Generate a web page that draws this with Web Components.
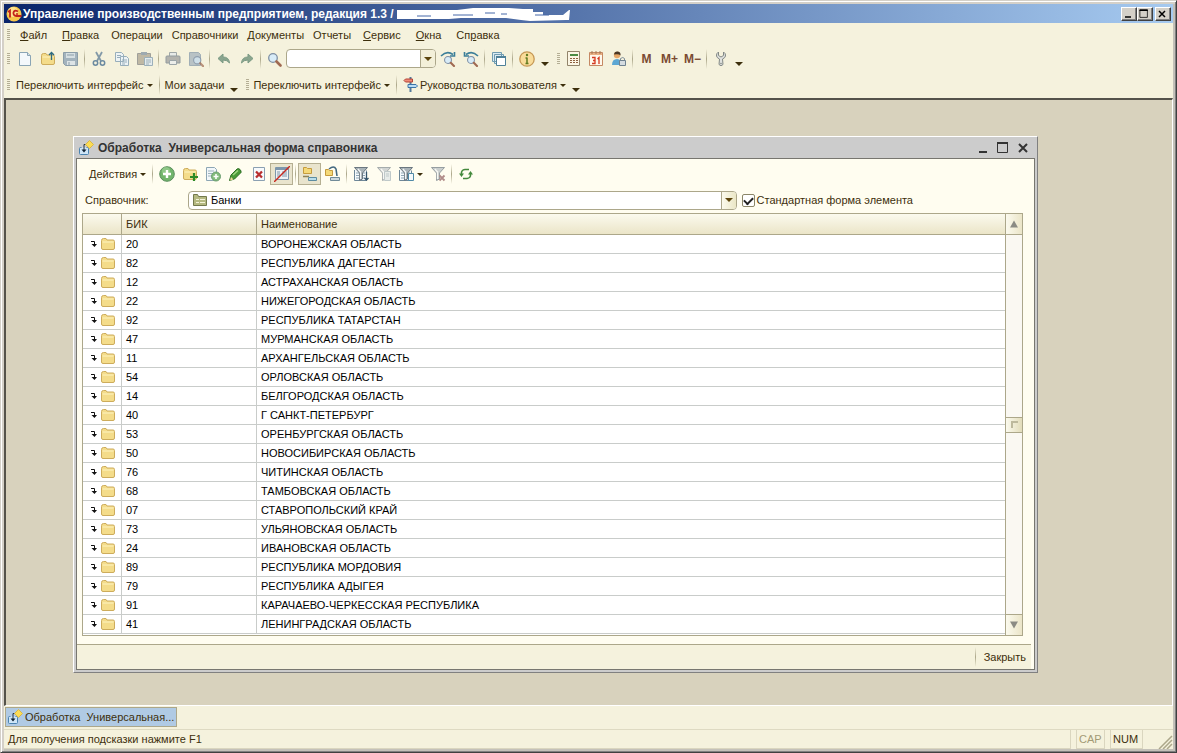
<!DOCTYPE html>
<html lang="ru">
<head>
<meta charset="utf-8">
<title>Управление производственным предприятием</title>
<style>
  html, body {
    height: 100%;
    margin: 0;
  }
  body {
    --cream: #f5f2dd;
    --line: #aca78a;
    --ink: #3d2f0c;
    font: 11px/16px "Liberation Sans", Arial, sans-serif;
    color: var(--ink);
  }
</style>
</head>
<body>
<app-frame>
  <title-bar slot="title"></title-bar>
  <menu-bar slot="menu"></menu-bar>
  <main-tools slot="tools"></main-tools>
  <mdi-window heading="Обработка  Универсальная форма справоника">
    <form-tools></form-tools>
    <catalog-form></catalog-form>
    <bank-table></bank-table>
    <button-bar slot="footer"></button-bar>
  </mdi-window>
  <task-bar slot="tasks"></task-bar>
  <status-bar slot="status"></status-bar>
</app-frame>

<script>
/** Inner svg markup of every icon, 16x16 */
const folder = `<path d="M1.500 4.500q0-2 2-2h2.500l1 1.500h6q1.500 0 1.500 1.500v6.500q0 1.500-1.500 1.500h-10q-1.500 0-1.500-1.500z" fill="#f4dc8a" stroke="#cdac5c"/><path d="M2.500 6h11" stroke="#fdf3c0"/>`;
const sheet = `<path d="M2.500 1.500h8l3 3v10h-11z" fill="#f3f8fb" stroke="#8aa5b5"/><path d="M10.500 1.500v3h3" fill="#d5e3ea" stroke="#8aa5b5"/>`;
const glass = (x, y) => `<g transform="translate(${x} ${y})"><circle cx="5" cy="5" r="4.300" fill="#d8ecf8" stroke="#7e8fa3" stroke-width="1.300"/><path d="M8.500 8.500l4 4" stroke="#a06a52" stroke-width="2.600" stroke-linecap="round"/></g>`;
const funnel = (c) => `<path d="M1.500 1.500h13l-5 5.500v6l-3 1.500v-7.500z" fill="${c}" stroke="#6b7780"/><path d="M7.500 5v8M5 3l2 2.500" stroke="#f4f6f7" stroke-width="1.300"/>`;
const lines = `<path d="M1.500 4v10.500h12v-10" fill="#f6fafc" stroke="#6e8798"/><path d="M3 7h9M3 9.500h9M3 12h9" stroke="#8ea6b5"/>`;

const ICONS = {
  logo: `<circle cx="8" cy="8" r="7.500" fill="#f7c64a"/><circle cx="7" cy="6" r="5" fill="#fff0ad" opacity=".7"/><path d="M2 6l2-1.500v7M12 5.500q-3.500-2-4.500 1-.5 3 3 3.500h5" fill="none" stroke="#c4231a" stroke-width="1.800"/><path d="M12 8H10" stroke="#c4231a" stroke-width="1.500"/>`,
  processing: `<path d="M3.500 7.500h-1q-1 0-1 1v5q0 1 1 1h7q1 0 1-1v-5q0-1-1-1h-1" fill="#cfe6f7" stroke="#4a83b0"/><path d="M6 11V4.500h3" fill="none" stroke="#234"/><path d="M3.500 9.500h5L6 12.500z" fill="#123"/><path d="M11.500 .5l4 4-4 4-4-4z" fill="#fbdc55" stroke="#d9b64a"/>`,
  doc: sheet,
  open: folder + `<path d="M11.500 9V1.500M9 4l2.500-2.500L14 4" fill="none" stroke="#2c6a80" stroke-width="1.300"/>`,
  save: `<path d="M.5 1.500h14v13h-12l-2-2z" fill="#a3b3bd" stroke="#8b9da8"/><path d="M3 2h9v5H3z" fill="#d6dfe2"/><path d="M4 10h8v4H4z" fill="#dde4e6"/><path d="M4 4h7M6 11v3" stroke="#8b9da8"/>`,
  cut: `<path d="M5 1l5 9M11 1L6 10" stroke="#8299a8" stroke-width="1.800"/><circle cx="4.500" cy="12" r="2.200" fill="none" stroke="#6b8aa0" stroke-width="1.500"/><circle cx="11.500" cy="12" r="2.200" fill="none" stroke="#6b8aa0" stroke-width="1.500"/>`,
  copy: `<path d="M1.500 1.500h6l2 2v7h-8zM6.500 5.500h6l2 2v7h-8z" fill="#edf3f5" stroke="#97aebb"/><path d="M3 4.500h4M3 6.500h3M8 9h5M8 11h5M8 13h3" stroke="#97aebb"/>`,
  paste: `<path d="M.5 2.500h13v11H.5z" fill="#bfb8a4" stroke="#a0a09a"/><path d="M4 1h6v3H4z" fill="#9eaab0"/><path d="M7.500 6.500h8v8h-8z" fill="#e4ebed" stroke="#9cb0ba"/><path d="M9 9h5M9 11h5M9 13h3" stroke="#9cb0ba"/>`,
  print: `<path d="M4.500 6V1.500h7V6" fill="#e8ebe8" stroke="#a0a8a8"/><path d="M1 6q0-1 1-1h12q1 0 1 1v6H1z" fill="#b3b3ad" stroke="#939c9f"/><path d="M4.500 9.500h7v4h-7z" fill="#eceeea" stroke="#9ba5a8"/>`,
  preview: `<path d="M1.500 1.500h9l2 2v11h-11z" fill="#b8c2c5" stroke="#a1afb6"/><g opacity=".7" transform="translate(5 5) scale(.85)">${glass(0, 0)}</g>`,
  undo: `<path d="M7 3v3q6 0 6.500 6-2-3-6.500-3v3L2 7.500z" fill="#8aa58e" stroke="#7b9a84"/>`,
  redo: `<path d="M9 3v3q-6 0-6.500 6 2-3 6.500-3v3l5-4.500z" fill="#8aa58e" stroke="#7b9a84"/>`,
  find: glass(1, 2),
  next: `<path d="M1 5q6-6 12-1.500M14.500 1v4H10" fill="none" stroke="#3c7f99" stroke-width="1.600"/><g transform="translate(4 5) scale(.8)">${glass(0, 0)}</g>`,
  prev: `<path d="M15 5q-6-6-12-1.500M1.500 1v4H6" fill="none" stroke="#3c7f99" stroke-width="1.600"/><g transform="translate(4 5) scale(.8)">${glass(0, 0)}</g>`,
  windows: `<path d="M1.500 1.500h9v9h-9zM3.500 3.500h9v9h-9z" fill="#dcebf2" stroke="#6f9bb0"/><path d="M5.500 5.500h9v9h-9z" fill="#fff" stroke="#4f8199"/><path d="M5 6h10" stroke="#4f8199" stroke-width="2"/>`,
  info: `<circle cx="8" cy="8" r="7.200" fill="#f9dc99" stroke="#c69855" stroke-width="1.300"/><path d="M8 6.500V13M6.500 7H8M6.500 12.500h3" stroke="#607a20" stroke-width="1.500"/><circle cx="8" cy="4" r="1.200" fill="#607a20"/>`,
  calc: `<path d="M2.500 .5h12v14h-12z" fill="#fbf6e4" stroke="#92846a"/><path d="M5 4h8" stroke="#4b8b43" stroke-width="2"/><path d="M5 7.500h8M5 9.500h8M5 11.500h8" stroke="#8e6040" stroke-dasharray="2 1"/>`,
  calendar: `<path d="M1.500 1.500h13v13h-13z" fill="#fff8ec" stroke="#c58863"/><path d="M2 3h12" stroke="#e9b184" stroke-width="2"/><path d="M4 0v3M8 0v3M12 0v3" stroke="#a57655"/><path d="M4 6.500h3v3H5M7 9.500v3H4M9.500 8l1.500-1.500V13" fill="none" stroke="#d5391f" stroke-width="1.300"/>`,
  user: `<circle cx="6" cy="4" r="3.200" fill="#e7a868"/><path d="M3 3.500Q3.500 0 7 .5q3 .5 2.500 4Q8 2.500 3 3.500z" fill="#493725"/><path d="M1 14q0-6 5-6t5 6z" fill="#5ca7d3"/><path d="M9.500 9V7.500q2.500-2 4 0V9" fill="none" stroke="#7e8d96"/><path d="M8.500 9.500h6v5h-6z" fill="#d5dce0" stroke="#6f8290"/>`,
  wrench: `<path d="M5.500 1Q3 2.500 3.500 5q.5 2 3 3l-.5 5.500q2 2.500 4 0L9.500 8q2.500-1 3-3 .5-2.500-2-4v3.500L8 6 5.500 4.500z" fill="#dfe1de" stroke="#838986"/><circle cx="8" cy="12.500" r=".8" fill="#838986"/>`,
  signpost: `<path d="M7.500 0v15" stroke="#53799a" stroke-width="2"/><path d="M1 3.500l1.500-1.500h7v3h-7z" fill="#ee8a78" stroke="#b34335"/><path d="M5 7.500h8l1.500 1.500-1.500 1.500H5z" fill="#b8dcf5" stroke="#3a73a8"/>`,
  add: `<circle cx="8" cy="8" r="7.300" fill="#72b56c" stroke="#5a8d5c"/><circle cx="7" cy="5" r="4" fill="#aad99f" opacity=".5"/><path d="M8 4v8M4 8h8" stroke="#fff" stroke-width="2.400"/>`,
  addFolder: folder + `<path d="M12 7v8M8 11h8" stroke="#2d8a27" stroke-width="2.200"/>`,
  addCopy: `<path d="M1.500 1.500h8l2 2v11h-10z" fill="#f2f7fa" stroke="#8da6b4"/><path d="M3 5h6M3 7.500h5M3 10h4" stroke="#9cb1bd"/><circle cx="11" cy="10.500" r="4.500" fill="#84bd7c" stroke="#6b9d70"/><path d="M11 8v5M8.500 10.500h5" stroke="#fff" stroke-width="1.600"/>`,
  edit: `<path d="M3 9l6-6q1.500-1 3 .5t1 3l-6.500 6.500-5 1.500z" fill="#4b9a38" stroke="#2f6e26"/><path d="M5 9l5-4.500" stroke="#a2d783" stroke-width="1.500"/><path d="M2 14.500l1-3.500 2.500 2.500z" fill="#f0d69a"/>`,
  remove: `<path d="M2.500 1.500h11v13h-11z" fill="#f7fafc" stroke="#8ba0b2"/><path d="M5 5.500l6 6M11 5.500l-6 6" stroke="#b92e2e" stroke-width="2.300"/>`,
  mark: `<path d="M1.500 1.500h13v12h-13z" fill="#eef2f5" stroke="#7d96ab"/><path d="M1 3h14" stroke="#7d96ab" stroke-width="2"/><path d="M3 6h3M3 8h3M3 10h3M8 6h5M8 8h5M8 10h5" stroke="#7d96ab"/><path d="M0 16L16 0" stroke="#c8281f" stroke-width="1.400"/>`,
  tree: `<path d="M1.500 1.500h3l1 1h4v5h-8z" fill="#f4d978" stroke="#c59b3d"/><path d="M1 10.500h6" stroke="#8d8356" stroke-width="1.500"/><path d="M6.500 11.500h8v3h-8z" fill="#b9ddea" stroke="#5d8ca0"/>`,
  move: `<path d="M.5 3.500h3l1 1h3v5h-7z" fill="#f4d978" stroke="#c59b3d"/><path d="M4 3q5-4 7 0l1 7" fill="none" stroke="#436880" stroke-width="1.600"/><path d="M5.500 11.500h9v3h-9z" fill="#cdd9de" stroke="#718b98"/>`,
  filterSet: lines + funnel("#a9b3b8") + `<path d="M13.500 6v8M11.500 12l2 2 2-2" fill="none" stroke="#34536a" stroke-width="1.300"/>`,
  filterValue: `<g opacity=".6">${funnel("#b5bcc0")}<path d="M8.500 5.500h6v9h-6z" fill="#dae2e6" stroke="#95a7b0"/><path d="M10 8h3M10 10h3" stroke="#95a7b0"/></g>`,
  filterList: lines + funnel("#a9b3b8") + `<path d="M10.500 7.500h5v7h-5z" fill="#f4f9fc" stroke="#508aa7"/>`,
  filterOff: `<g opacity=".7">${funnel("#b5bcc0")}</g><path d="M9.500 9.500l5 5M14.500 9.500l-5 5" stroke="#b18c89" stroke-width="1.800"/>`,
  refresh: `<path d="M3.500 8Q3 4 7 3.500h4M12.500 8q.5 4-3.500 4.500H5" fill="none" stroke="#43893c" stroke-width="1.600"/><path d="M1 7.500h5L3.500 11zM10 8.500h5L12.500 5z" fill="#43893c"/>`,
  catalog: `<path d="M1.500 2.500h4l1 2h8v9h-13z" fill="#b5b982" stroke="#73794d"/><path d="M4 7.500h3M8 7.500h5M4 10.500h3M8 10.500h5" stroke="#f4f3d9"/>`,
  folder,
  branch: `<path d="M6 5.500h3.500V9" fill="none" stroke="#111"/><path d="M6.500 8h5.500l-2.500 3z" fill="#111"/>`,
  up: `<path d="M4 11.500h8l-4-7z" fill="#8b8b84"/>`,
  down: `<path d="M4 4.500h8l-4 7z" fill="#8b8b84"/>`,
  minimize: `<path d="M4 12h8" stroke="currentColor" stroke-width="2"/>`,
  maximize: `<path d="M2.500 2.500h10v10h-10z" fill="none" stroke="currentColor"/><path d="M2 3h11" stroke="currentColor" stroke-width="2"/>`,
  close: `<path d="M4 4l8 8M12 4l-8 8" stroke="currentColor" stroke-width="2"/>`,
  more: `<path d="M4 9h8l-4 4z" fill="#3d2f0c"/>`,
  caret: `<path d="M5 7h6l-3 3z" fill="#3d2f0c"/>`,
  comboCaret: `<path d="M4 6h8l-4 4z" fill="#5c450c"/>`,
  grip: `<path d="M2 16L15 3M6 16l9-9M10 16l5-5" stroke="#aca78a" stroke-width="1.500"/>`
};

const icon = (name, cls = "") =>
  `<svg class="icon ${cls}" viewBox="0 0 16 16" width="16" height="16" aria-hidden="true">${ICONS[name]}</svg>`;

// rules that every element starts with
const BASE = `
  :host { display: block; box-sizing: border-box; }
  * { box-sizing: border-box; }
  svg { display: block; flex: none; }
  button, input {
    font: inherit;
    color: inherit;
    margin: 0;
    padding: 0;
    border: 0;
    background: none;
  }
`;

// rules shared by the toolbars
const TOOLS = `
  .row { display: flex; align-items: center; }
  .tool {
    display: flex;
    align-items: center;
    justify-content: center;
    flex: none;
    width: 23px;
    height: 22px;
    border: 1px solid transparent;
  }
  .tool.pressed { background: #e9e4cd; border-color: #b5af92; }
  .label { width: auto; white-space: nowrap; }
  .caret { margin: 0 -4px 0 -2px; }
  .sep {
    flex: none;
    width: 1px;
    height: 20px;
    margin: 0 2px;
    background: linear-gradient(transparent, #aca78a, transparent);
  }
  .grip {
    flex: none;
    width: 3px;
    height: 12px;
    background: repeating-linear-gradient(#b4ae94 0 1px, transparent 1px 2px);
  }
  .more { width: 13px; padding-top: 4px; }
`;

class BaseElement extends HTMLElement {
  constructor() {
    super();
    this.attachShadow({ mode: "open" });
  }

  /**
   * Put style and markup into the shadow root
   * @param {string} css
   * @param {string} html
   */
  render(css, html) {
    const template = document.createElement("template");
    template.innerHTML = `<style>${BASE}${css}</style>${html}`;
    this.shadowRoot.replaceChildren(template.content.cloneNode(true));
  }
}

const tool = (name, title, cls = "") =>
  `<button class="tool ${cls}" title="${title}" aria-label="${title}">${icon(name)}</button>`;
const more = `<button class="tool more" aria-label="Ещё">${icon("more")}</button>`;
const sep = `<span class="sep"></span>`;
const grip = `<span class="grip"></span>`;

class AppFrame extends BaseElement {
  connectedCallback() {
    this.render(`
      :host {
        display: flex;
        flex-direction: column;
        min-height: 100vh;
        padding: 3px;
        background: var(--cream);
        border: 1px solid #d4d0c8;
        border-right-color: #404040;
        border-bottom-color: #404040;
        box-shadow: inset 1px 1px #fff, inset -1px -1px #808080, inset 3px 3px #d4d0c8, inset -3px -3px #c4c1b9;
      }
      .desk {
        display: flex;
        flex: 1;
        padding: 36px 134px 32px 67px;
        background: #d8d2bd;
        border: 2px solid #54524a;
        border-right: 1px solid #fff;
        border-bottom: 1px solid #fff;
      }
    `, `
      <slot name="title"></slot>
      <slot name="menu"></slot>
      <slot name="tools"></slot>
      <main class="desk"><slot></slot></main>
      <slot name="tasks"></slot>
      <slot name="status"></slot>
    `);
  }
}

class TitleBar extends BaseElement {
  connectedCallback() {
    this.render(`
      :host {
        display: flex;
        align-items: center;
        height: 19px;
        padding: 0 2px;
        color: #fff;
        background: linear-gradient(90deg, #0a246a, #a6caf0);
      }
      h1 {
        margin: 0 0 0 1px;
        font-size: 12px;
        line-height: 16px;
        white-space: pre;
      }
      .space { flex: 1; }
      button {
        width: 16px;
        height: 14px;
        color: #000;
        background: #d4d0c8;
        border: 1px solid #fff;
        border-right-color: #404040;
        border-bottom-color: #404040;
        box-shadow: inset -1px -1px #808080;
      }
      button svg { width: 12px; height: 12px; }
      .close { margin-left: 2px; }
    `, `
      ${icon("logo")}
      <h1>Управление производственным предприятием, редакция 1.3 / </h1>
      <svg width="176" height="14" viewBox="0 0 176 14" fill="#fff" aria-hidden="true">
        <path d="M0 3h60l16-2h36l14 1h10v3h10v3h20l6-5h1l-1 10h-3l-36 1-9-1-15-2H64l-12 1H0z"/>
        <path d="M20 9h14M56 8h20M88 6h10M104 7h6M138 8h14" stroke="#4768a8"/>
      </svg>
      <span class="space"></span>
      <button aria-label="Свернуть">${icon("minimize")}</button>
      <button aria-label="Развернуть">${icon("maximize")}</button>
      <button class="close" aria-label="Закрыть">${icon("close")}</button>
    `);
  }
}

class MenuBar extends BaseElement {
  connectedCallback() {
    // & stands before the accelerator letter
    const items = ["&Файл", "&Правка", "Операции", "Справочники", "Документы",
      "Отчеты", "&Сервис", "&Окна", "Сп&равка"];
    this.render(`
      ${TOOLS}
      nav { display: flex; align-items: center; height: 23px; padding-left: 3px; }
      .grip { margin-right: 7px; }
      button { margin-right: 9px; }
      .key { padding: 0 3px; }
    `, `
      <nav>${grip}${items.map((item) =>
        `<button class="${item.includes("&") ? "key" : ""}">${item.replace(/&(.)/, "<u>$1</u>")}</button>`
      ).join("")}</nav>
    `);
  }
}

class MainTools extends BaseElement {
  connectedCallback() {
    this.render(`
      ${TOOLS}
      .row { height: 25px; padding-left: 3px; }
      .row + .row { height: 27px; }
      .grip { margin-right: 3px; }
      .inner { margin: 0 1px 0 6px; }
      .combo {
        display: flex;
        flex: none;
        width: 150px;
        height: 19px;
        background: #fff;
        border: 1px solid var(--line);
        border-radius: 4px;
        overflow: hidden;
      }
      .combo input { flex: 1; min-width: 0; }
      .combo button {
        width: 15px;
        background: #f3f0d9;
        border-left: 1px solid var(--line);
      }
      .combo svg { margin-left: -1px; }
      .mem { font-size: 12px; font-weight: bold; color: #7a4a32; }
      .label { padding: 0 2px; }
      .guide { gap: 1px; padding-left: 3px; }
      .guide .caret { margin-left: -3px; }
    `, `
      <div class="row">
        ${grip}
        ${tool("doc", "Новый")}${tool("open", "Открыть")}${tool("save", "Сохранить")}${sep}
        ${tool("cut", "Вырезать")}${tool("copy", "Копировать")}${tool("paste", "Вставить")}${sep}
        ${tool("print", "Печать")}${tool("preview", "Просмотр")}${sep}
        ${tool("undo", "Отменить")}${tool("redo", "Вернуть")}${sep}
        ${tool("find", "Найти")}
        <div class="combo"><input aria-label="Поиск"><button aria-label="Список">${icon("comboCaret")}</button></div>
        ${tool("next", "Найти следующий")}${tool("prev", "Найти предыдущий")}${sep}
        ${tool("windows", "Окна")}${sep}
        ${tool("info", "Справка")}${more}
        <span class="grip inner"></span>
        ${tool("calc", "Калькулятор")}${tool("calendar", "Календарь")}${tool("user", "Пользователи")}${sep}
        <button class="tool mem">M</button><button class="tool mem">M+</button><button class="tool mem">M−</button>${sep}
        ${tool("wrench", "Настройка")}${more}
      </div>
      <div class="row">
        ${grip}
        <button class="tool label">Переключить интерфейс${icon("caret", "caret")}</button>${sep}
        <button class="tool label">Мои задачи</button>${more}
        <span class="grip inner"></span>
        <button class="tool label">Переключить интерфейс${icon("caret", "caret")}</button>${sep}
        <button class="tool label guide">${icon("signpost")}Руководства пользователя${icon("caret", "caret")}</button>${more}
      </div>
    `);
  }
}

class MdiWindow extends BaseElement {
  connectedCallback() {
    this.render(`
      :host {
        display: flex;
        flex-direction: column;
        flex: 1;
        min-width: 0;
        padding: 1px 2px 2px;
        background: #ccc;
        border: 1px solid #fff;
        border-right-color: #808080;
        border-bottom-color: #808080;
      }
      header {
        display: flex;
        align-items: center;
        height: 20px;
        padding: 0 2px;
        color: #333;
      }
      h2 {
        flex: 1;
        margin: 0 0 0 4px;
        font-size: 12px;
        line-height: 16px;
        white-space: pre;
      }
      header button { width: 20px; }
      header button svg { margin: auto; }
      .body {
        display: flex;
        flex-direction: column;
        flex: 1;
        background: #fffdf0;
        border: 1px solid #77766f;
      }
      .content {
        display: flex;
        flex-direction: column;
        flex: 1;
        padding: 4px 11px 8px 5px;
      }
    `, `
      <header>
        ${icon("processing")}
        <h2>${this.getAttribute("heading")}</h2>
        <button aria-label="Свернуть">${icon("minimize")}</button>
        <button aria-label="Развернуть">${icon("maximize")}</button>
        <button aria-label="Закрыть">${icon("close")}</button>
      </header>
      <div class="body">
        <div class="content"><slot></slot></div>
        <slot name="footer"></slot>
      </div>
    `);
  }
}

class FormTools extends BaseElement {
  connectedCallback() {
    this.render(`
      ${TOOLS}
      .row { height: 22px; }
      .label { padding: 0 2px 0 6px; }
      .list { width: 31px; }
    `, `
      <div class="row">
        <button class="tool label">Действия${icon("caret", "caret")}</button>${sep}
        ${tool("add", "Добавить")}${tool("addFolder", "Новая группа")}${tool("addCopy", "Скопировать")}
        ${tool("edit", "Изменить")}${tool("remove", "Удалить")}${tool("mark", "Пометить", "pressed")}${sep}
        ${tool("tree", "Иерархия", "pressed")}${tool("move", "Переместить")}${sep}
        ${tool("filterSet", "Отбор")}${tool("filterValue", "Отбор по значению")}
        <button class="tool list" aria-label="История отборов">${icon("filterList")}${icon("caret", "caret")}</button>
        ${tool("filterOff", "Отключить отбор")}${sep}
        ${tool("refresh", "Обновить")}
      </div>
    `);
  }
}

class CatalogForm extends BaseElement {
  connectedCallback() {
    this.render(`
      .row { display: flex; align-items: center; height: 28px; padding: 2px 110px 0 3px; }
      .name { flex: none; width: 103px; }
      .combo {
        display: flex;
        align-items: center;
        flex: 1;
        height: 19px;
        padding-left: 3px;
        color: #000;
        background: #fff;
        border: 1px solid var(--line);
        border-radius: 4px;
        overflow: hidden;
      }
      .combo input { flex: 1; min-width: 0; margin-left: 3px; }
      .combo button {
        width: 15px;
        height: 17px;
        background: linear-gradient(90deg, #fbfaed, #ebe7c6);
        border-left: 1px solid var(--line);
      }
      .combo button svg { margin-left: -1px; }
      .check { display: flex; align-items: center; gap: 2px; margin-left: 5px; white-space: nowrap; }
      .check input {
        appearance: none;
        display: grid;
        place-items: center;
        width: 13px;
        height: 13px;
        background: #fff;
        border: 1px solid #8b8668;
        border-radius: 2px;
      }
      .check input:checked::before {
        content: "";
        width: 7px;
        height: 4px;
        border: solid #222;
        border-width: 0 0 2px 2px;
        transform: rotate(-45deg);
      }
    `, `
      <div class="row">
        <label class="name" for="catalog">Справочник:</label>
        <div class="combo">
          ${icon("catalog")}
          <input id="catalog" value="Банки">
          <button aria-label="Список">${icon("comboCaret")}</button>
        </div>
        <label class="check"><input type="checkbox" checked>Стандартная форма элемента</label>
      </div>
    `);
  }
}

class BankTable extends BaseElement {
  connectedCallback() {
    const rows = [
      ["20", "ВОРОНЕЖСКАЯ ОБЛАСТЬ"], ["82", "РЕСПУБЛИКА ДАГЕСТАН"],
      ["12", "АСТРАХАНСКАЯ ОБЛАСТЬ"], ["22", "НИЖЕГОРОДСКАЯ ОБЛАСТЬ"],
      ["92", "РЕСПУБЛИКА ТАТАРСТАН"], ["47", "МУРМАНСКАЯ ОБЛАСТЬ"],
      ["11", "АРХАНГЕЛЬСКАЯ ОБЛАСТЬ"], ["54", "ОРЛОВСКАЯ ОБЛАСТЬ"],
      ["14", "БЕЛГОРОДСКАЯ ОБЛАСТЬ"], ["40", "Г САНКТ-ПЕТЕРБУРГ"],
      ["53", "ОРЕНБУРГСКАЯ ОБЛАСТЬ"], ["50", "НОВОСИБИРСКАЯ ОБЛАСТЬ"],
      ["76", "ЧИТИНСКАЯ ОБЛАСТЬ"], ["68", "ТАМБОВСКАЯ ОБЛАСТЬ"],
      ["07", "СТАВРОПОЛЬСКИЙ КРАЙ"], ["73", "УЛЬЯНОВСКАЯ ОБЛАСТЬ"],
      ["24", "ИВАНОВСКАЯ ОБЛАСТЬ"], ["89", "РЕСПУБЛИКА МОРДОВИЯ"],
      ["79", "РЕСПУБЛИКА АДЫГЕЯ"], ["91", "КАРАЧАЕВО-ЧЕРКЕССКАЯ РЕСПУБЛИКА"],
      ["41", "ЛЕНИНГРАДСКАЯ ОБЛАСТЬ"]
    ];
    this.render(`
      :host {
        display: flex;
        flex: 1;
        background: #fff;
        border: 1px solid var(--line);
      }
      .view { flex: 1; min-width: 0; }
      table {
        width: 100%;
        table-layout: fixed;
        border-collapse: separate;
        border-spacing: 0;
      }
      .c1 { width: 38px; }
      .c2 { width: 135px; }
      th, td { padding: 0 4px; text-align: left; }
      th {
        height: 21px;
        font-weight: normal;
        background: linear-gradient(#fbfaee, #ebe5c8);
        border-bottom: 1px solid var(--line);
      }
      th + th { border-left: 1px solid var(--line); }
      td {
        height: 19px;
        color: #000;
        border-bottom: 1px solid #c9ccca;
      }
      td + td { border-left: 1px solid #c9ccca; }
      .mark { display: flex; align-items: center; }
      .mark .branch { margin: 0 -1px 0 -2px; }
      .scroll {
        display: flex;
        flex-direction: column;
        width: 17px;
        background: #faf8f2;
        border-left: 1px solid var(--line);
      }
      .scroll button { height: 21px; background: linear-gradient(90deg, #fbfaee, #ebe5c8); }
      .scroll .up { border-bottom: 1px solid var(--line); }
      .scroll .down { border-top: 1px solid var(--line); }
      .track { display: flex; align-items: center; flex: 1; }
      .thumb {
        display: grid;
        place-items: center;
        width: 100%;
        height: 16px;
        background: linear-gradient(90deg, #fbfaee, #e2dcba);
        border: solid var(--line);
        border-width: 1px 0;
      }
      .thumb::before {
        content: "";
        width: 5px;
        height: 5px;
        border: solid #bdb99d;
        border-width: 2px 0 0 2px;
      }
    `, `
      <div class="view">
        <table>
          <thead><tr><th class="c1"></th><th class="c2">БИК</th><th>Наименование</th></tr></thead>
          <tbody>${rows.map(([code, name]) => `
            <tr><td><span class="mark">${icon("branch", "branch")}${icon("folder")}</span></td><td>${code}</td><td>${name}</td></tr>`).join("")}
          </tbody>
        </table>
      </div>
      <div class="scroll">
        <button class="up" aria-label="Вверх">${icon("up")}</button>
        <div class="track"><div class="thumb"></div></div>
        <button class="down" aria-label="Вниз">${icon("down")}</button>
      </div>
    `);
  }
}

class ButtonBar extends BaseElement {
  connectedCallback() {
    this.render(`
      ${TOOLS}
      .row {
        justify-content: flex-end;
        height: 25px;
        margin: 0 3px 0 0;
        padding-right: 5px;
        background: var(--cream);
        border-top: 1px solid var(--line);
      }
      .sep { margin-right: 8px; }
    `, `<div class="row">${sep}<button>Закрыть</button></div>`);
  }
}

class TaskBar extends BaseElement {
  connectedCallback() {
    this.render(`
      :host { padding: 1px; height: 23px; }
      button {
        display: flex;
        align-items: center;
        gap: 2px;
        width: 172px;
        height: 20px;
        padding-left: 1px;
        background: #b0cae4;
        border: 1px solid var(--line);
        white-space: pre;
      }
    `, `<button>${icon("processing")}Обработка  Универсальная...</button>`);
  }
}

class StatusBar extends BaseElement {
  connectedCallback() {
    this.render(`
      :host {
        display: flex;
        gap: 5px;
        height: 20px;
        border-top: 1px solid #dedac2;
      }
      span {
        padding: 0 3px;
        line-height: 18px;
        border: solid #dad6bf;
        border-width: 0 1px 1px;
      }
      .hint { flex: 1; padding-left: 4px; border-left: 0; }
      .key { flex: none; width: 29px; padding: 0 2px; }
      .num { width: 33px; }
      .off { color: #a39a75; }
      svg { margin: 3px 0 0 9px; }
    `, `
      <span class="hint">Для получения подсказки нажмите F1</span>
      <span class="key off">CAP</span>
      <span class="key num">NUM</span>
      ${icon("grip")}
    `);
  }
}

customElements.define("app-frame", AppFrame);
customElements.define("title-bar", TitleBar);
customElements.define("menu-bar", MenuBar);
customElements.define("main-tools", MainTools);
customElements.define("mdi-window", MdiWindow);
customElements.define("form-tools", FormTools);
customElements.define("catalog-form", CatalogForm);
customElements.define("bank-table", BankTable);
customElements.define("button-bar", ButtonBar);
customElements.define("task-bar", TaskBar);
customElements.define("status-bar", StatusBar);
</script>
</body>
</html>
